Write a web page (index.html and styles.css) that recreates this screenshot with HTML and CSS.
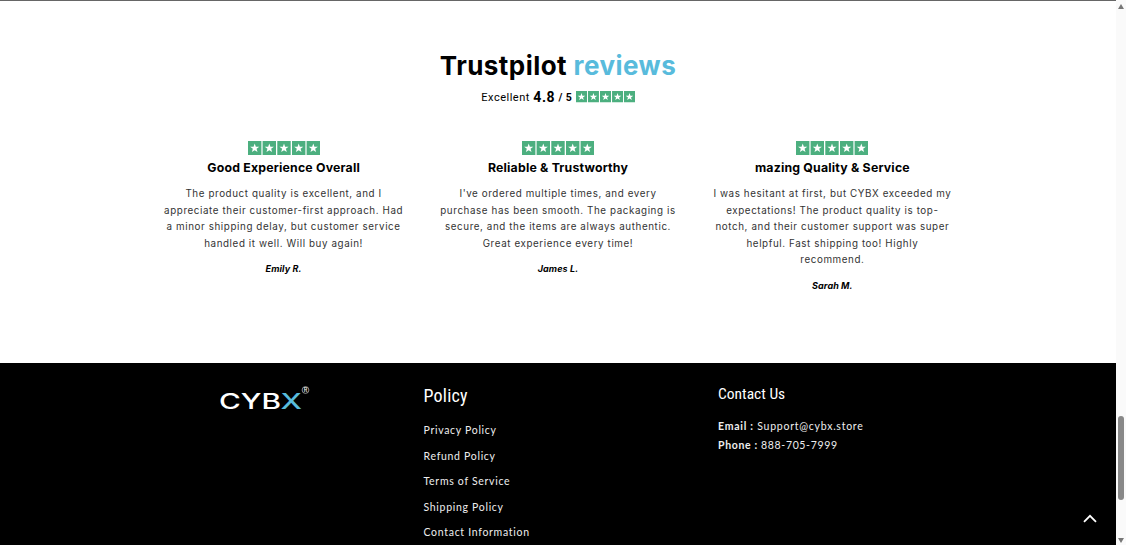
FILE: index.html
```html
<!DOCTYPE html>
<html lang="en">
<head>
    <meta charset="UTF-8">
    <meta name="viewport" content="width=device-width, initial-scale=1.0">
    <title>CYBX</title>
    <link rel="stylesheet" href="styles.css">
</head>
<body>
    <svg class="defs" width="0" height="0">
        <symbol id="stars" viewBox="0 0 72 14">
            <path fill="#4caf7f" d="M0 0h13.4v14H0zM14.6 0H28v14H14.6zM29.3 0h13.4v14H29.3zM44 0h13.4v14H44zM58.6 0H72v14H58.6z"/>
            <g fill="#fff">
                <path id="star" d="M6.7 2.4l1.15 3.25 3.45.08-2.75 2.08.98 3.3-2.83-1.96-2.83 1.96.98-3.3L2.1 5.73l3.45-.08z"/>
                <use href="#star" x="14.6"/>
                <use href="#star" x="29.3"/>
                <use href="#star" x="44"/>
                <use href="#star" x="58.6"/>
            </g>
        </symbol>
    </svg>
    <div class="page">
        <section class="reviews">
            <h1>Trustpilot <span>reviews</span></h1>
            <div class="rating">
                <span class="word">Excellent</span>
                <span class="score">4.8</span>
                <span class="max">/ 5</span>
                <svg class="small-stars"><use href="#stars"/></svg>
            </div>
            <div class="cards">
                <div class="card">
                    <svg class="stars"><use href="#stars"/></svg>
                    <h2>Good Experience Overall</h2>
                    <p>The product quality is excellent, and I<br>appreciate their customer-first approach. Had<br>a minor shipping delay, but customer service<br>handled it well. Will buy again!</p>
                    <p class="author">Emily R.</p>
                </div>
                <div class="card">
                    <svg class="stars"><use href="#stars"/></svg>
                    <h2>Reliable &amp; Trustworthy</h2>
                    <p>I've ordered multiple times, and every<br>purchase has been smooth. The packaging is<br>secure, and the items are always authentic.<br>Great experience every time!</p>
                    <p class="author">James L.</p>
                </div>
                <div class="card">
                    <svg class="stars"><use href="#stars"/></svg>
                    <h2>mazing Quality &amp; Service</h2>
                    <p>I was hesitant at first, but CYBX exceeded my<br>expectations! The product quality is top-<br>notch, and their customer support was super<br>helpful. Fast shipping too! Highly<br>recommend.</p>
                    <p class="author">Sarah M.</p>
                </div>
            </div>
        </section>
        <footer>
            <svg class="logo" viewBox="0 0 92 28">
                <text x="-1" y="24" textLength="62" lengthAdjust="spacingAndGlyphs">CYB</text>
                <text class="blue" x="60.5" y="24" textLength="21.5" lengthAdjust="spacingAndGlyphs">X</text>
                <circle cx="85.5" cy="5" r="3.4"/>
                <text class="mark" x="85.5" y="6.9">R</text>
            </svg>
            <div class="policy">
                <h3>Policy</h3>
                <ul>
                    <li>Privacy Policy</li>
                    <li>Refund Policy</li>
                    <li>Terms of Service</li>
                    <li>Shipping Policy</li>
                    <li>Contact Information</li>
                </ul>
            </div>
            <div class="contact">
                <h3>Contact Us</h3>
                <p><b>Email :</b> Support@cybx.store</p>
                <p class="phone"><b>Phone :</b> 888-705-7999</p>
            </div>
            <svg class="to-top" viewBox="0 0 14 9"><path d="M1 7.8L7 1.8l6 6"/></svg>
        </footer>
    </div>
    <div class="scrollbar">
        <svg viewBox="0 0 6 5"><path d="M3 0l3 5H0z"/></svg>
        <div class="thumb"></div>
        <svg viewBox="0 0 6 5"><path d="M0 0h6L3 5z"/></svg>
    </div>
</body>
</html>
```
FILE: styles.css
```css
body{
    margin: 0;
    height: 545px;
    display: flex;
    overflow: hidden;
    background-color: white;
    font-family: Inter, "Open Sans", sans-serif;
    color: black;
}
h1, h2, h3, p, ul{
    margin: 0;
    padding: 0;
}
svg{
    display: block;
}
.defs{
    position: absolute;
}
.page{
    width: 1116px;
    display: flex;
    flex-direction: column;
}

.reviews{
    box-sizing: border-box;
    height: 363px;
    border-top: 1px solid #666;
    padding-top: 49px;
    text-align: center;
}
h1{
    font-size: 26px;
    line-height: 32px;
    font-weight: 700;
    letter-spacing: 0.45px;
}
h1 span{
    color: #58bbdc;
}
.rating{
    display: flex;
    justify-content: center;
    align-items: center;
    gap: 3.5px;
    height: 20px;
    margin-top: 5px;
    font-family: Roboto, sans-serif;
    font-size: 11px;
}
.word{
    letter-spacing: 0.5px;
}
.score{
    font-size: 14px;
    font-weight: 700;
    letter-spacing: 0.5px;
}
.max{
    font-size: 10.5px;
    font-weight: 700;
    letter-spacing: 0.4px;
}
.small-stars{
    width: 59px;
    height: 11.5px;
}
.cards{
    display: grid;
    grid-template-columns: repeat(3, 274.4px);
    justify-content: center;
    margin-top: 34px;
}
.stars{
    width: 72px;
    height: 14px;
    margin: 0 auto;
}
h2{
    font-size: 12.3px;
    line-height: 18px;
    font-weight: 700;
    letter-spacing: 0.2px;
    margin-top: 3.5px;
}
.card p{
    margin-top: 9.5px;
    font-size: 9.8px;
    line-height: 16.6px;
    letter-spacing: 0.6px;
    color: #333;
    white-space: nowrap;
}
.card .author{
    margin-top: 9px;
    font-size: 9px;
    font-weight: 700;
    font-style: italic;
    letter-spacing: 0.1px;
    color: black;
}

footer{
    position: relative;
    box-sizing: border-box;
    height: 182px;
    padding: 22px 0 0 220px;
    display: grid;
    grid-template-columns: 203.5px 294.5px 1fr;
    overflow: hidden;
    background-color: black;
    color: #eee;
}
.logo{
    width: 92px;
    height: 28px;
    font-family: Inter, sans-serif;
    font-size: 21px;
    font-weight: 500;
    fill: white;
}
.logo .blue{
    fill: #58bbdc;
}
.logo circle{
    fill: none;
    stroke: #ccc;
    stroke-width: 0.7;
}
.logo .mark{
    font-size: 5.5px;
    text-anchor: middle;
}
h3{
    font-family: "Liberation Sans Narrow", "Roboto Condensed", sans-serif;
    font-size: 18px;
    line-height: 22px;
    font-weight: 400;
    letter-spacing: 0.2px;
    color: white;
}
.policy li{
    list-style: none;
    height: 25.6px;
}
.policy ul{
    margin-top: 15px;
    font-family: Lato, sans-serif;
    font-size: 10.5px;
    line-height: 16px;
    letter-spacing: 0.7px;
}
.contact{
    font-family: Lato, sans-serif;
    font-size: 10.5px;
    line-height: 19px;
    letter-spacing: 0.75px;
}
.contact h3{
    font-size: 15.5px;
    line-height: 19px;
    letter-spacing: 0;
    margin-bottom: 13px;
}
.phone{
    letter-spacing: 0.65px;
}
.to-top{
    position: absolute;
    left: 1083px;
    top: 150.5px;
    width: 14px;
    height: 9px;
    fill: none;
    stroke: white;
    stroke-width: 1.8;
}

.scrollbar{
    box-sizing: border-box;
    width: 10px;
    padding: 4px 2px 2px;
    display: flex;
    flex-direction: column;
    justify-content: space-between;
    background-color: #fafafa;
}
.scrollbar svg{
    width: 6px;
    height: 5px;
    fill: #777;
}
.thumb{
    height: 84px;
    margin-top: 369px;
    border-radius: 3px;
    background-color: #888;
}
```
